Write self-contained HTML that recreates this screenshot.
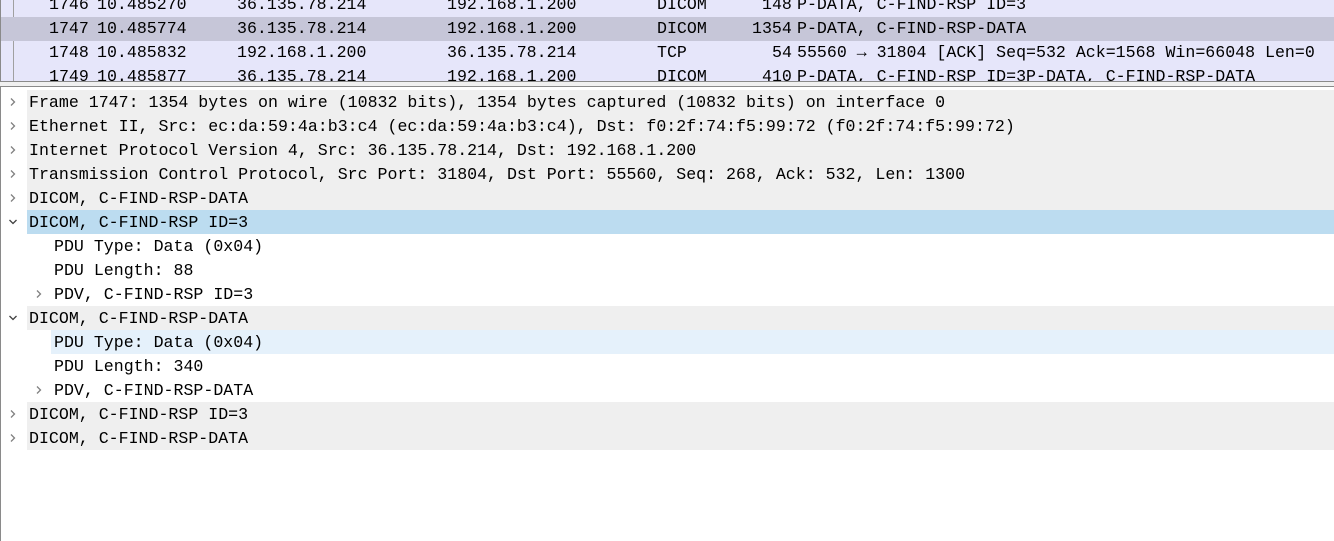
<!DOCTYPE html>
<html><head><style>
*{margin:0;padding:0;box-sizing:border-box}
body{width:1334px;height:541px;overflow:hidden;background:#f0f0f0;font-family:"Liberation Mono",monospace;font-size:16.6px;color:#000;position:relative}
.top{position:absolute;left:0;top:0;width:1334px;height:82px;background:#e6e6fa;border-left:1px solid #8a8a8a;border-bottom:1px solid #8a8a8a;overflow:hidden}
.vl{position:absolute;left:12px;top:0;width:1px;height:82px;background:#a0a0a0}
.pr{position:absolute;left:0;width:1334px;height:24px;line-height:24px;white-space:pre}
.pr span{position:absolute;top:0}
.sel{background:#c6c6d8}
.det{position:absolute;left:0;top:86px;width:1334px;height:455px;background:#fff;border-left:1px solid #8a8a8a;border-top:1px solid #8a8a8a}
.r{position:absolute;left:0;width:1334px;height:24px;line-height:24px;white-space:pre}
.r .bg{position:absolute;left:26px;right:0;top:0;bottom:0}
.r .t{position:absolute;top:1px}
.g{background:#efefef}
.s{background:#bcdcf0}
.h{background:#e5f1fb}
.ar{position:absolute;top:7px;width:10px;height:10px}
</style></head><body>
<svg width="0" height="0" style="position:absolute">
<defs>
<symbol id="c" viewBox="0 0 10 10"><path d="M3 1.5 L6.5 5 L3 8.5" fill="none" stroke="#808080" stroke-width="1.3"/></symbol>
<symbol id="d" viewBox="0 0 10 10"><path d="M1.5 3 L5 6.5 L8.5 3" fill="none" stroke="#404040" stroke-width="1.3"/></symbol>
</defs></svg>
<div class="top">
<div class="vl"></div>
<div class="pr" style="top:-7px"><span style="left:48px">1746</span><span style="left:96px">10.485270</span><span style="left:236px">36.135.78.214</span><span style="left:446px">192.168.1.200</span><span style="left:656px">DICOM</span><span style="left:761px">148</span><span style="left:796px">P-DATA, C-FIND-RSP ID=3</span></div>
<div class="pr sel" style="top:17px"><span style="left:48px">1747</span><span style="left:96px">10.485774</span><span style="left:236px">36.135.78.214</span><span style="left:446px">192.168.1.200</span><span style="left:656px">DICOM</span><span style="left:751px">1354</span><span style="left:796px">P-DATA, C-FIND-RSP-DATA</span></div>
<div class="pr" style="top:41px"><span style="left:48px">1748</span><span style="left:96px">10.485832</span><span style="left:236px">192.168.1.200</span><span style="left:446px">36.135.78.214</span><span style="left:656px">TCP</span><span style="left:771px">54</span><span style="left:796px">55560 → 31804 [ACK] Seq=532 Ack=1568 Win=66048 Len=0</span></div>
<div class="pr" style="top:65px"><span style="left:48px">1749</span><span style="left:96px">10.485877</span><span style="left:236px">36.135.78.214</span><span style="left:446px">192.168.1.200</span><span style="left:656px">DICOM</span><span style="left:761px">410</span><span style="left:796px">P-DATA, C-FIND-RSP ID=3P-DATA, C-FIND-RSP-DATA</span></div>
</div>
<div class="det">
<div class="r" style="top:3px"><div class="bg g"></div><svg class="ar" style="left:7px"><use href="#c"/></svg><span class="t" style="left:28px">Frame 1747: 1354 bytes on wire (10832 bits), 1354 bytes captured (10832 bits) on interface 0</span></div>
<div class="r" style="top:27px"><div class="bg g"></div><svg class="ar" style="left:7px"><use href="#c"/></svg><span class="t" style="left:28px">Ethernet II, Src: ec:da:59:4a:b3:c4 (ec:da:59:4a:b3:c4), Dst: f0:2f:74:f5:99:72 (f0:2f:74:f5:99:72)</span></div>
<div class="r" style="top:51px"><div class="bg g"></div><svg class="ar" style="left:7px"><use href="#c"/></svg><span class="t" style="left:28px">Internet Protocol Version 4, Src: 36.135.78.214, Dst: 192.168.1.200</span></div>
<div class="r" style="top:75px"><div class="bg g"></div><svg class="ar" style="left:7px"><use href="#c"/></svg><span class="t" style="left:28px">Transmission Control Protocol, Src Port: 31804, Dst Port: 55560, Seq: 268, Ack: 532, Len: 1300</span></div>
<div class="r" style="top:99px"><div class="bg g"></div><svg class="ar" style="left:7px"><use href="#c"/></svg><span class="t" style="left:28px">DICOM, C-FIND-RSP-DATA</span></div>
<div class="r" style="top:123px"><div class="bg s"></div><svg class="ar" style="left:7px"><use href="#d"/></svg><span class="t" style="left:28px">DICOM, C-FIND-RSP ID=3</span></div>
<div class="r" style="top:147px"><span class="t" style="left:53px">PDU Type: Data (0x04)</span></div>
<div class="r" style="top:171px"><span class="t" style="left:53px">PDU Length: 88</span></div>
<div class="r" style="top:195px"><svg class="ar" style="left:33px"><use href="#c"/></svg><span class="t" style="left:53px">PDV, C-FIND-RSP ID=3</span></div>
<div class="r" style="top:219px"><div class="bg g"></div><svg class="ar" style="left:7px"><use href="#d"/></svg><span class="t" style="left:28px">DICOM, C-FIND-RSP-DATA</span></div>
<div class="r" style="top:243px"><div class="bg h" style="left:50px"></div><span class="t" style="left:53px">PDU Type: Data (0x04)</span></div>
<div class="r" style="top:267px"><span class="t" style="left:53px">PDU Length: 340</span></div>
<div class="r" style="top:291px"><svg class="ar" style="left:33px"><use href="#c"/></svg><span class="t" style="left:53px">PDV, C-FIND-RSP-DATA</span></div>
<div class="r" style="top:315px"><div class="bg g"></div><svg class="ar" style="left:7px"><use href="#c"/></svg><span class="t" style="left:28px">DICOM, C-FIND-RSP ID=3</span></div>
<div class="r" style="top:339px"><div class="bg g"></div><svg class="ar" style="left:7px"><use href="#c"/></svg><span class="t" style="left:28px">DICOM, C-FIND-RSP-DATA</span></div>
</div>
</body></html>
